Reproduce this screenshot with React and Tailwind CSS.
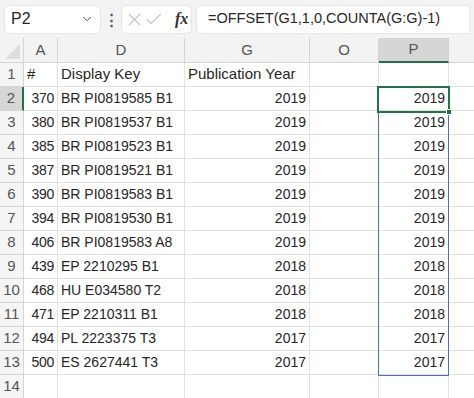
import React from "react";
import { ChevronDown } from "lucide-react";

const rows = [
  ["370", "BR PI0819585 B1", "2019"],
  ["380", "BR PI0819537 B1", "2019"],
  ["385", "BR PI0819523 B1", "2019"],
  ["387", "BR PI0819521 B1", "2019"],
  ["390", "BR PI0819583 B1", "2019"],
  ["394", "BR PI0819530 B1", "2019"],
  ["406", "BR PI0819583 A8", "2019"],
  ["439", "EP 2210295 B1", "2018"],
  ["468", "HU E034580 T2", "2018"],
  ["471", "EP 2210311 B1", "2018"],
  ["494", "PL 2223375 T3", "2017"],
  ["500", "ES 2627441 T3", "2017"],
];

const gridCols = "grid grid-cols-[24px_34px_127px_125px_69px_70px_1fr]";
const cell = "h-6 border-r border-b border-[#e1e1e1] px-[3px] flex items-center whitespace-nowrap overflow-hidden";
const rowHead = "h-6 border-r border-b border-[#d4d4d4] bg-[#f5f5f5] flex items-center justify-center text-[#555]";

const Toolbar = () => (
  <div className="flex h-[38px] items-center bg-[#f3f3f3] px-[5px]">
    <div className="flex h-[27px] w-[95px] items-center justify-between rounded-[5px] bg-white px-[6px] shadow-[0_0_0_1px_#e6e6e6]">
      <span className="text-[16px] text-[#262626]">P2</span>
      <ChevronDown size={14} strokeWidth={1.6} className="text-[#444]" />
    </div>
    <div className="flex w-[22px] justify-center text-[15px] font-bold leading-none text-[#555]">⋮</div>
    <div className="flex h-[27px] w-[69px] items-center gap-[5px] rounded-[5px] bg-white pl-[6px] shadow-[0_0_0_1px_#e6e6e6]">
      <svg width="13" height="13" viewBox="0 0 13 13" fill="none" stroke="#c3c3c3" strokeWidth="1.2">
        <path d="M1 1L12 12M12 1L1 12" />
      </svg>
      <svg width="16" height="12" viewBox="0 0 16 12" fill="none" stroke="#c3c3c3" strokeWidth="1.2">
        <path d="M1 6.5L5 10.5L15 1" />
      </svg>
      <span className="ml-[8px] font-['Liberation_Serif',serif] text-[16px] font-bold italic text-[#333]">
        fx
      </span>
    </div>
    <div className="ml-[6px] flex h-[27px] flex-1 items-center rounded-l-[5px] bg-white pl-[11px] shadow-[0_0_0_1px_#e6e6e6]">
      <span className="text-[14.5px] text-[#262626]">=OFFSET(G1,1,0,COUNTA(G:G)-1)</span>
    </div>
  </div>
);

export default function App() {
  return (
    <div className="h-[398px] w-[474px] overflow-hidden bg-white font-['Liberation_Sans',Arial,sans-serif] text-[14px] text-[#262626]">
      <Toolbar />
      <div className="relative">
        <div className={`${gridCols} h-[25px] bg-[#f3f3f3] text-[15px] text-[#555]`}>
          <div className="relative border-r border-b border-[#d4d4d4]">
            <svg className="absolute bottom-[3px] right-[3px]" width="15" height="15" viewBox="0 0 15 15">
              <path d="M15 0V15H0Z" fill="#dedede" />
            </svg>
          </div>
          <div className="flex items-center justify-center border-r border-b border-[#d4d4d4]">A</div>
          <div className="flex items-center justify-center border-r border-b border-[#d4d4d4]">D</div>
          <div className="flex items-center justify-center border-r border-b border-[#d4d4d4]">G</div>
          <div className="flex items-center justify-center border-r border-b border-[#d4d4d4]">O</div>
          <div className="flex items-center justify-center border-r border-b-2 border-r-[#d4d4d4] border-b-[#217346] bg-[#d6d6d6]">P</div>
          <div className="border-b border-[#d4d4d4]" />
        </div>

        <div className={gridCols}>
          <div className={`${rowHead} text-[15px]`}>1</div>
          <div className={`${cell} text-[15px]`}>#</div>
          <div className={`${cell} text-[15px]`}>Display Key</div>
          <div className={`${cell} text-[15px]`}>Publication Year</div>
          <div className={cell} />
          <div className={cell} />
          <div className="h-6 border-b border-[#e1e1e1]" />
        </div>

        {rows.map((r, i) => {
          const n = i + 2;
          const active = n === 2;
          return (
            <div key={n} className={gridCols}>
              <div
                className={
                  active
                    ? "flex h-6 items-center justify-center border-r-2 border-b border-r-[#217346] border-b-[#d4d4d4] bg-[#d6d6d6] text-[15px] text-[#555]"
                    : `${rowHead} text-[15px]`
                }
              >
                {n}
              </div>
              <div className={`${cell} justify-end tracking-[-0.3px]`}>{r[0]}</div>
              <div className={`${cell} text-[14px]`}>{r[1]}</div>
              <div className={`${cell} justify-end`}>{r[2]}</div>
              <div className={cell} />
              <div className={`${cell} justify-end`}>{r[2]}</div>
              <div className="h-6 border-b border-[#e1e1e1]" />
            </div>
          );
        })}

        <div className={gridCols}>
          <div className={`${rowHead} text-[15px]`}>14</div>
          <div className={cell} />
          <div className={cell} />
          <div className={cell} />
          <div className={cell} />
          <div className={cell} />
          <div className="h-6 border-b border-[#e1e1e1]" />
        </div>

        {/* spill range outline */}
        <div className="pointer-events-none absolute left-[378px] top-[73px] h-[265px] w-[71px] border border-[#4f6bc7]" />
        {/* active cell */}
        <div className="pointer-events-none absolute left-[377px] top-[48px] h-[27px] w-[73px] border-2 border-[#217346]" />
        <div className="pointer-events-none absolute left-[446px] top-[71px] h-[6px] w-[6px] border border-white bg-[#217346]" />
      </div>
    </div>
  );
}
